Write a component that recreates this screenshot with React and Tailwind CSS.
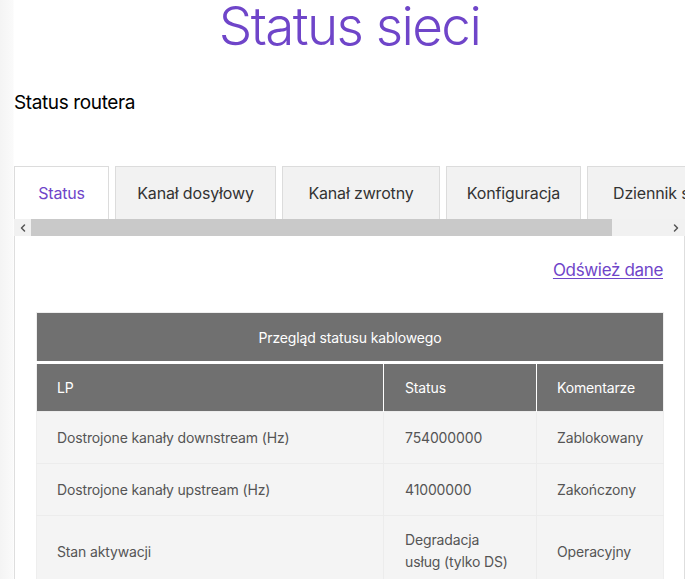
import { ChevronLeft, ChevronRight } from "lucide-react";

const tabs = ["Status", "Kanał dosyłowy", "Kanał zwrotny", "Konfiguracja", "Dziennik systemowy"];

const rows = [
  { lp: "Dostrojone kanały downstream (Hz)", status: ["754000000"], comment: "Zablokowany" },
  { lp: "Dostrojone kanały upstream (Hz)", status: ["41000000"], comment: "Zakończony" },
  { lp: "Stan aktywacji", status: ["Degradacja", "usług (tylko DS)"], comment: "Operacyjny" },
];

export default function App() {
  return (
    <div className="min-h-screen w-[699px] overflow-hidden bg-[linear-gradient(to_right,#f4f4f4_0px,#fafafa_13px,#fff_14px)] font-['Inter',sans-serif] text-[#222]">
      {/* Tytuł */}
      <h1 className="h-[50px] pt-[2px] text-center text-[53px] font-light leading-[48px] tracking-[-0.03em] text-[#6f45c9]">
        Status sieci
      </h1>

      <div className="pl-[14px] pt-[40px]">
        <h2 className="text-[19px] leading-[26px] tracking-[-0.02em] text-black">Status routera</h2>

        <div className="mt-[50px] w-[671px]">
          {/* Zakładki */}
          <div className="flex gap-[6px] overflow-hidden">
            {tabs.map((t, i) => (
              <div
                key={t}
                className={`flex h-[53px] shrink-0 items-center justify-center border border-b-0 border-[#dcdcdc] text-[16px] tracking-[-0.01em] ${
                  i === 0 ? "w-[95px] bg-white text-[#6f45c9]" : "bg-[#f2f2f2] text-[#333]"
                } ${i === 1 ? "w-[161px]" : ""} ${i === 2 ? "w-[158px]" : ""} ${i === 3 ? "w-[135px]" : ""} ${
                  i === 4 ? "w-[170px] justify-start pl-[25px]" : ""
                }`}
              >
                <span className="whitespace-nowrap">{t}</span>
              </div>
            ))}
          </div>

          {/* Pasek przewijania */}
          <div className="flex h-[17px] bg-[#f1f1f1]">
            <div className="flex w-[17px] items-center justify-center text-[#555]">
              <ChevronLeft size={12} strokeWidth={3} />
            </div>
            <div className="w-[581px] bg-[#c9c9c9]" />
            <div className="flex flex-1 items-center justify-end pr-[3px] text-[#555]">
              <ChevronRight size={12} strokeWidth={3} />
            </div>
          </div>

          {/* Panel */}
          <div className="border-x border-[#dedede] px-[21px] pb-10">
            <div className="flex justify-end pt-[22px]">
              <a href="#" className="text-[17px] leading-[24px] tracking-[-0.02em] text-[#6f45c9] underline underline-offset-2">
                Odśwież dane
              </a>
            </div>

            <table className="mt-[30px] w-[628px] border-collapse border border-[#eeeeee] text-[14px] tracking-[-0.01em]">
              <thead>
                <tr className="h-[50px] bg-[#707070]">
                  <th colSpan={3} className="border-b-[3px] border-white text-center font-normal text-white">
                    Przegląd statusu kablowego
                  </th>
                </tr>
                <tr className="h-[49px] bg-[#707070] text-left text-white">
                  <th className="w-[347px] border-r border-white pl-[20px] font-normal">LP</th>
                  <th className="w-[153px] border-r border-white pl-[21px] font-normal">Status</th>
                  <th className="pl-[20px] font-normal">Komentarze</th>
                </tr>
              </thead>
              <tbody className="text-[#555]">
                {rows.map((r) => (
                  <tr key={r.lp} className="border-t border-[#ececec] bg-[#f4f4f4]">
                    <td className="h-[52px] border-r border-[#ececec] pl-[20px]">{r.lp}</td>
                    <td className="border-r border-[#ececec] py-[13px] pl-[21px] pr-2 leading-[22px]">
                      {r.status.map((s) => (
                        <span key={s} className="block whitespace-nowrap">
                          {s}
                        </span>
                      ))}
                    </td>
                    <td className="pl-[20px]">{r.comment}</td>
                  </tr>
                ))}
              </tbody>
            </table>
          </div>
        </div>
      </div>
    </div>
  );
}
